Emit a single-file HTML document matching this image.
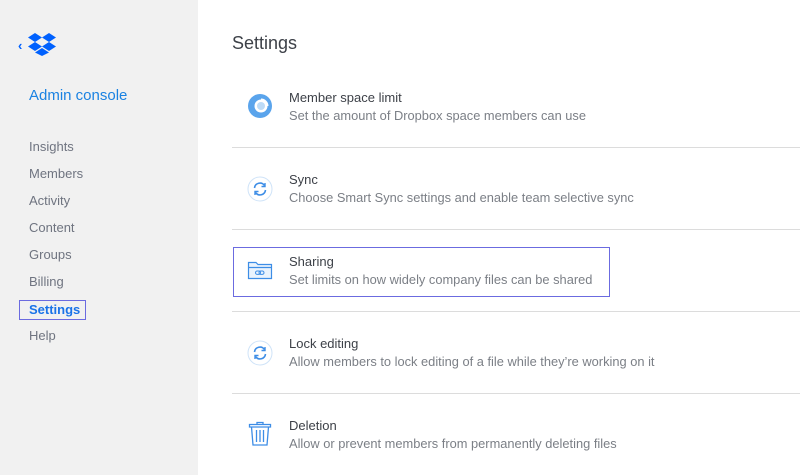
<!DOCTYPE html>
<html><head><style>
*{margin:0;padding:0;box-sizing:border-box}
body{width:800px;height:475px;overflow:hidden;font-family:"Liberation Sans",sans-serif;background:#fff;position:relative}
.side{position:absolute;left:0;top:0;width:198px;height:475px;background:#f1f1f1}
.nav{position:absolute;left:29px;font-size:13px;color:#6f7480}
.abs{position:absolute}
.t{position:absolute;left:289px;font-size:13px;color:#3d4148}
.s{position:absolute;left:289px;font-size:12.85px;color:#7b7f86}
.hr{position:absolute;left:232px;right:0;height:1px;background:#dcdcdc}
</style></head><body>
<div class="side">
  <div class="abs" style="left:18px;top:38px;color:#0061fe;font-size:13px;font-weight:bold">‹</div>
  <svg class="abs" style="left:28px;top:32px" width="28" height="24" viewBox="0 0 28 24">
    <path fill="#0061fe" d="M7 1 L14 5.5 L7 10 L0 5.5Z M21 1 L28 5.5 L21 10 L14 5.5Z M7 10 L14 14.5 L7 19 L0 14.5Z M21 10 L28 14.5 L21 19 L14 14.5Z M14 16 L21 20.5 L14 24 L7 20.5Z"/>
  </svg>
  <div class="abs" style="left:29px;top:87px;font-size:15px;color:#1a82e2">Admin console</div>
  <div class="nav" style="top:139px">Insights</div>
  <div class="nav" style="top:166px">Members</div>
  <div class="nav" style="top:193px">Activity</div>
  <div class="nav" style="top:220px">Content</div>
  <div class="nav" style="top:247px">Groups</div>
  <div class="nav" style="top:274px">Billing</div>
  <div class="abs" style="left:19px;top:300px;width:67px;height:20px;border:1px solid #6b6be0"></div>
  <div class="nav" style="top:302px;color:#1a73e8;font-weight:bold">Settings</div>
  <div class="nav" style="top:328px">Help</div>
</div>
<div class="abs" style="left:232px;top:33px;font-size:18px;color:#3d4148">Settings</div>

<svg class="abs" style="left:247px;top:93px" width="26" height="26" viewBox="0 0 26 26"><circle cx="13" cy="13" r="12" fill="#5aa4ec"/><circle cx="14" cy="13" r="6.5" fill="#fff"/><circle cx="14" cy="13" r="4" fill="#5aa4ec" opacity=".4"/><path d="M14 6.5 A6.5 6.5 0 0 1 20.5 13" stroke="#fff" stroke-width="2" fill="none"/></svg>
<div class="t" style="top:90px">Member space limit</div>
<div class="s" style="top:108px">Set the amount of Dropbox space members can use</div>
<div class="hr" style="top:147px"></div>

<svg class="abs" style="left:247px;top:176px" width="26" height="26" viewBox="0 0 26 26"><circle cx="13" cy="13" r="12" fill="#fff" stroke="#cfe3f8"/><path d="M7.5 12 A5.5 5.5 0 0 1 17.5 9.5 M18.5 14 A5.5 5.5 0 0 1 8.5 16.5" stroke="#3d8de6" stroke-width="1.6" fill="none"/><path d="M18 7 L18 10.5 L14.5 10.5 M8 19 L8 15.5 L11.5 15.5" stroke="#3d8de6" stroke-width="1.4" fill="none"/></svg>
<div class="t" style="top:172px">Sync</div>
<div class="s" style="top:190px">Choose Smart Sync settings and enable team selective sync</div>
<div class="hr" style="top:229px"></div>

<div class="abs" style="left:233px;top:247px;width:377px;height:50px;border:1px solid #6b6be0"></div>
<svg class="abs" style="left:247px;top:259px" width="26" height="22" viewBox="0 0 26 22"><path d="M1.5 3.5 H9 L11 5.5 H24.5 V19.5 H1.5Z M1.5 8.5 H24.5" stroke="#3d8de6" stroke-width="1.2" fill="#eaf3fd"/><rect x="8.5" y="12" width="5" height="3.4" rx="1.7" stroke="#3d8de6" fill="none"/><rect x="12" y="12" width="5" height="3.4" rx="1.7" stroke="#3d8de6" fill="none"/></svg>
<div class="t" style="top:254px">Sharing</div>
<div class="s" style="top:272px">Set limits on how widely company files can be shared</div>
<div class="hr" style="top:311px"></div>

<svg class="abs" style="left:247px;top:340px" width="26" height="26" viewBox="0 0 26 26"><circle cx="13" cy="13" r="12" fill="#fff" stroke="#cfe3f8"/><path d="M7.5 12 A5.5 5.5 0 0 1 17.5 9.5 M18.5 14 A5.5 5.5 0 0 1 8.5 16.5" stroke="#3d8de6" stroke-width="1.6" fill="none"/><path d="M18 7 L18 10.5 L14.5 10.5 M8 19 L8 15.5 L11.5 15.5" stroke="#3d8de6" stroke-width="1.4" fill="none"/></svg>
<div class="t" style="top:336px">Lock editing</div>
<div class="s" style="top:354px">Allow members to lock editing of a file while they’re working on it</div>
<div class="hr" style="top:393px"></div>

<svg class="abs" style="left:248px;top:421px" width="24" height="26" viewBox="0 0 24 26"><path d="M9 3 V1.5 H15 V3 M1.5 3.5 H22.5 V6 H1.5Z M3.5 6 L5 24 H19 L20.5 6 M8.5 9 V21 M12 9 V21 M15.5 9 V21" stroke="#3d8de6" stroke-width="1.3" fill="none"/></svg>
<div class="t" style="top:418px">Deletion</div>
<div class="s" style="top:436px">Allow or prevent members from permanently deleting files</div>
</body></html>
